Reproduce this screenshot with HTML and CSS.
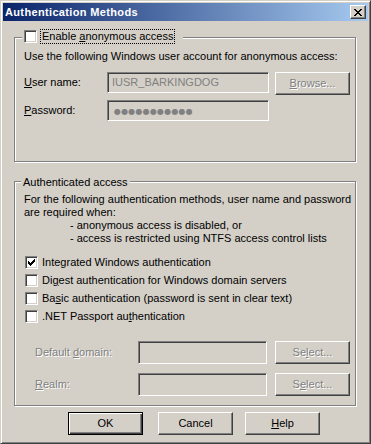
FILE: index.html
```html
<!DOCTYPE html>
<html lang="en">
<head>
    <meta charset="UTF-8">
    <meta name="viewport" content="width=device-width, initial-scale=1.0">
    <title>Authentication Methods</title>
    <link rel="stylesheet" href="styles.css">
</head>
<body>
    <div class="window">
        <div class="titlebar">
            <span class="title">Authentication Methods</span>
            <button class="close-btn" aria-label="Close">
                <svg width="8" height="7" viewBox="0 0 8 7" shape-rendering="crispEdges">
                    <path d="M0 0h2v1h-2z M6 0h2v1h-2z M1 1h2v1h-2z M5 1h2v1h-2z M2 2h4v1h-4z M3 3h2v1h-2z M2 4h4v1h-4z M1 5h2v1h-2z M5 5h2v1h-2z M0 6h2v1h-2z M6 6h2v1h-2z" fill="#000"/>
                </svg>
            </button>
        </div>

        <div class="dialog-body">
            <!-- Anonymous access -->
            <div class="group group-anon">
                <div class="legend legend-check">
                    <span class="checkbox"></span>
                    <span class="focus-label">Enable <u>a</u>nonymous access</span>
                </div>
                <p class="note">Use the following Windows user account for anonymous access:</p>
                <div class="field-row first-row">
                    <span class="field-label"><u>U</u>ser name:</span>
                    <div class="edit edit-user">IUSR_BARKINGDOG</div>
                    <button class="btn disabled"><u>B</u>rowse...</button>
                </div>
                <div class="field-row second-row">
                    <span class="field-label"><u>P</u>assword:</span>
                    <div class="edit edit-user"><span class="dots">●●●●●●●●●●●</span></div>
                </div>
            </div>

            <!-- Authenticated access -->
            <div class="group group-auth">
                <div class="legend">Authenticated access</div>
                <p class="note">For the following authentication methods, user name and password<br>are required when:</p>
                <p class="note indent">- anonymous access is disabled, or<br>- access is restricted using NTFS access control lists</p>

                <div class="check-list">
                    <div class="check-row">
                        <span class="checkbox">
                            <svg width="7" height="7" viewBox="0 0 7 7" shape-rendering="crispEdges">
                                <path d="M6 0h1v1h-1z M5 1h2v1h-2z M0 2h1v1h-1z M4 2h3v1h-3z M0 3h2v1h-2z M3 3h3v1h-3z M0 4h5v1h-5z M1 5h3v1h-3z M2 6h1v1h-1z" fill="#000"/>
                            </svg>
                        </span>
                        <span class="check-label">Integrated Windows authentication</span>
                    </div>
                    <div class="check-row">
                        <span class="checkbox"></span>
                        <span class="check-label">Di<u>g</u>est authentication for Windows domain servers</span>
                    </div>
                    <div class="check-row">
                        <span class="checkbox"></span>
                        <span class="check-label">Ba<u>s</u>ic authentication (password is sent in clear text)</span>
                    </div>
                    <div class="check-row">
                        <span class="checkbox"></span>
                        <span class="check-label">.NET Passport au<u>t</u>hentication</span>
                    </div>
                </div>

                <div class="field-row domain-row">
                    <span class="field-label wide disabled-text">Default <u>d</u>omain:</span>
                    <div class="edit edit-small"></div>
                    <button class="btn disabled wide-gap">Se<u>l</u>ect...</button>
                </div>
                <div class="field-row realm-row">
                    <span class="field-label wide disabled-text"><u>R</u>ealm:</span>
                    <div class="edit edit-small"></div>
                    <button class="btn disabled wide-gap">S<u>e</u>lect...</button>
                </div>
            </div>

            <div class="button-row">
                <button class="btn default-btn">OK</button>
                <button class="btn cancel-btn">Cancel</button>
                <button class="btn help-btn"><u>H</u>elp</button>
            </div>
        </div>
    </div>
</body>
</html>
```

FILE: styles.css
```css
html, body {
    margin: 0;
    padding: 0;
}
body {
    font-family: "Liberation Sans", Arial, sans-serif;
    font-size: 11px;
    line-height: 13px;
    color: #000;
    background: #d4d0c8;
}
u {
    text-underline-offset: 1px;
}
.window {
    box-sizing: border-box;
    width: 371px;
    height: 444px;
    padding: 2px;
    border: 1px solid;
    border-color: #d4d0c8 #404040 #404040 #d4d0c8;
    box-shadow: inset 1px 1px 0 #fff, inset -1px -1px 0 #808080;
    background: #d4d0c8;
}
.titlebar {
    height: 18px;
    display: flex;
    align-items: center;
    justify-content: space-between;
    padding: 0 2px;
    background: linear-gradient(to right, #0a246a, #a6caf0);
}
.title {
    color: #fff;
    font-weight: bold;
    letter-spacing: 0.35px;
}
.btn, .close-btn {
    box-sizing: border-box;
    margin: 0;
    padding: 0;
    font: inherit;
    color: #000;
    background: #d4d0c8;
    border: 1px solid;
    border-color: #fff #404040 #404040 #fff;
    box-shadow: inset -1px -1px 0 #808080;
    display: flex;
    align-items: center;
    justify-content: center;
}
.close-btn {
    width: 16px;
    height: 14px;
}
.btn {
    width: 75px;
    height: 23px;
}
.btn.disabled, .disabled-text {
    color: #808080;
    text-shadow: 1px 1px 0 #fff;
}
.dialog-body {
    padding: 16px 12px 0 11px;
}
.group {
    box-sizing: border-box;
    border: 1px solid #808080;
    box-shadow: inset 1px 1px 0 #fff, 1px 1px 0 #fff;
}
.group-anon {
    height: 125px;
}
.group-auth {
    height: 225px;
    margin-top: 19px;
}
.legend {
    width: fit-content;
    background: #d4d0c8;
    margin: -6px 0 0 6px;
    padding: 0 2px;
}
.legend-check {
    display: flex;
    align-items: center;
    height: 15px;
    margin: -9px 0 0 7px;
    padding: 0 8px 0 2px;
}
.checkbox {
    box-sizing: border-box;
    width: 13px;
    height: 13px;
    flex: none;
    display: flex;
    align-items: center;
    justify-content: center;
    background: #fff;
    border: 1px solid;
    border-color: #808080 #fff #fff #808080;
    box-shadow: inset 1px 1px 0 #404040, inset -1px -1px 0 #d4d0c8;
}
.focus-label {
    margin-left: 3px;
    padding: 0 1px;
    border: 1px dotted #000;
}
.note {
    margin: 6px 0 0 9px;
}
.group-auth .note {
    margin-top: 4px;
}
.group-auth .note.indent {
    margin-top: 0;
    padding-left: 46px;
}
.field-row {
    display: flex;
    align-items: flex-start;
    margin-left: 9px;
}
.first-row {
    margin-top: 9px;
}
.second-row {
    margin-top: 5px;
}
.field-label {
    width: 83px;
    line-height: 21px;
}
.field-label.wide {
    width: 103px;
    line-height: 23px;
}
.edit {
    box-sizing: border-box;
    height: 21px;
    padding-left: 4px;
    line-height: 19px;
    color: #808080;
    border: 1px solid;
    border-color: #808080 #fff #fff #808080;
    box-shadow: inset 1px 1px 0 #404040, inset -1px -1px 0 #d4d0c8;
}
.edit-user {
    width: 162px;
}
.edit-small {
    width: 129px;
    height: 23px;
}
.dots {
    font-family: "DejaVu Sans", sans-serif;
    font-size: 8px;
    letter-spacing: 0.2px;
    padding-left: 2px;
}
.field-row .btn {
    margin-left: 6px;
}
.field-row .btn.wide-gap {
    margin-left: 8px;
}
.check-list {
    display: flex;
    flex-direction: column;
    gap: 5px;
    margin: 11px 0 0 10px;
}
.check-row {
    display: flex;
    align-items: center;
}
.check-label {
    margin-left: 4px;
}
.domain-row {
    margin: 18px 0 0 20px;
}
.realm-row {
    margin: 9px 0 0 20px;
}
.button-row {
    display: flex;
    margin-top: 6px;
    padding-left: 54px;
}
.default-btn {
    border: 1px solid #000;
    box-shadow: inset 1px 1px 0 #fff, inset -1px -1px 0 #404040, inset -2px -2px 0 #808080;
}
.cancel-btn {
    margin-left: 15px;
}
.help-btn {
    margin-left: 12px;
}
```
